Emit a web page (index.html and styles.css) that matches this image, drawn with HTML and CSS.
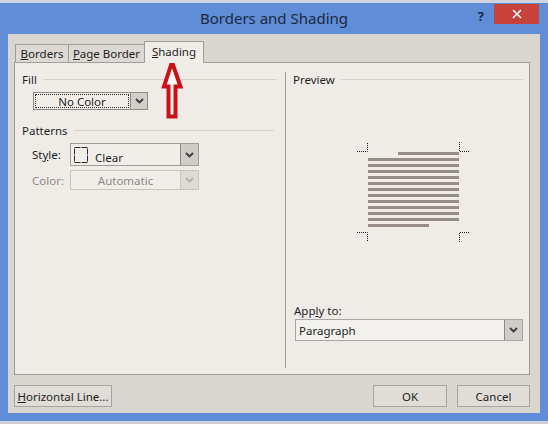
FILE: index.html
```html
<!DOCTYPE html>
<html>
<head>
<meta charset="utf-8">
<link rel="stylesheet" href="styles.css">
</head>
<body>
<div class="frame">
  <div class="titlebar">
    <div class="tb-spacer"></div>
    <div class="title">Borders and Shading</div>
    <div class="tb-controls">
      <span class="help">?</span>
      <span class="close"><svg width="10" height="10" viewBox="0 0 10 10"><path d="M1 1 L9 9 M9 1 L1 9" stroke="#fff" stroke-width="1.6" fill="none"/></svg></span>
    </div>
  </div>
  <div class="dialog">
    <div class="tabs">
      <div class="tab tab-first"><u>B</u>orders</div>
      <div class="tab tab-second"><u>P</u>age Border</div>
      <div class="tab active"><u>S</u>hading</div>
    </div>
    <div class="panel">
      <div class="col-left">
        <div class="group-title"><span>Fill</span><i class="rule"></i></div>
        <div class="combo nocolor">
          <div class="combo-text"><span class="focus">No Color</span></div>
          <div class="drop"><svg width="9" height="6" viewBox="0 0 9 6"><path d="M1 1 L4.5 4.5 L8 1" stroke="#3a3a3a" stroke-width="1.8" fill="none"/></svg></div>
        </div>
        <div class="group-title patterns"><span>Patterns</span><i class="rule"></i></div>
        <div class="field-row style-row">
          <span class="field-label">St<u>y</u>le:</span>
          <div class="combo style-combo">
            <div class="combo-text">
              <svg class="swatch" width="16" height="18" viewBox="0 0 16 18"><rect x="1.5" y="1.5" width="13" height="15" fill="none" stroke="#2a2a2a" stroke-width="1" stroke-dasharray="6 1"/></svg>
              <span class="clear-text">Clear</span>
            </div>
            <div class="drop"><svg width="9" height="6" viewBox="0 0 9 6"><path d="M1 1 L4.5 4.5 L8 1" stroke="#3a3a3a" stroke-width="1.8" fill="none"/></svg></div>
          </div>
        </div>
        <div class="field-row color-row disabled">
          <span class="field-label">Color:</span>
          <div class="combo color-combo">
            <div class="combo-text centered">Automatic</div>
            <div class="drop"><svg width="9" height="6" viewBox="0 0 9 6"><path d="M1 1 L4.5 4.5 L8 1" stroke="#b3b0ac" stroke-width="1.8" fill="none"/></svg></div>
          </div>
        </div>
      </div>
      <div class="col-right">
        <div class="group-title preview-title"><span>Preview</span><i class="rule"></i></div>
        <svg class="preview" width="113" height="100" viewBox="0 0 113 100">
          <g stroke="#1a1a1a" stroke-width="1" stroke-dasharray="1 1" fill="none">
            <path d="M0 9.5 H10.5 V0"/>
            <path d="M112 9.5 H102.5 V0"/>
            <path d="M0 90.5 H10.5 V100"/>
            <path d="M112 90.5 H102.5 V100"/>
          </g>
          <g fill="#958d86">
            <rect x="41" y="10" width="61" height="3"/>
            <rect x="11" y="16" width="91" height="3"/>
            <rect x="11" y="22" width="91" height="3"/>
            <rect x="11" y="28" width="91" height="3"/>
            <rect x="11" y="34" width="91" height="3"/>
            <rect x="11" y="40" width="91" height="3"/>
            <rect x="11" y="46" width="91" height="3"/>
            <rect x="11" y="52" width="91" height="3"/>
            <rect x="11" y="58" width="91" height="3"/>
            <rect x="11" y="64" width="91" height="3"/>
            <rect x="11" y="70" width="91" height="3"/>
            <rect x="11" y="76" width="91" height="3"/>
            <rect x="11" y="82" width="61" height="3"/>
          </g>
        </svg>
        <div class="apply-label">App<u>l</u>y to:</div>
        <div class="combo apply-combo">
          <div class="combo-text">Paragraph</div>
          <div class="drop"><svg width="9" height="6" viewBox="0 0 9 6"><path d="M1 1 L4.5 4.5 L8 1" stroke="#3a3a3a" stroke-width="1.8" fill="none"/></svg></div>
        </div>
      </div>
    </div>
    <div class="buttons">
      <div class="btn hline"><u>H</u>orizontal Line...</div>
      <div class="btn-group">
        <div class="btn ok">OK</div>
        <div class="btn cancel">Cancel</div>
      </div>
    </div>
  </div>
  <svg class="annot-arrow" width="30" height="68" viewBox="155 55 30 68">
    <polygon points="172,62 164,86.5 168.5,86.5 168.5,116.5 175.5,116.5 175.5,86.5 180.5,86.5" fill="#fbf7f5" stroke="#cc1018" stroke-width="4" stroke-linejoin="miter"/>
  </svg>
</div>
</body>
</html>
```

FILE: styles.css
```css
* { box-sizing: border-box; }
html, body { margin: 0; padding: 0; }
body {
  width: 548px;
  height: 424px;
  overflow: hidden;
  font-family: "Noto Sans", "DejaVu Sans", sans-serif;
  font-size: 11.5px;
  color: #1e1e1e;
}
u { text-decoration: underline; text-underline-offset: 1px; }

.frame {
  position: relative;
  width: 548px;
  height: 424px;
  background: #5f8dd7;
  border-top: 3px solid #cfd4dc;
  border-bottom: 3px solid #cdd1d6;
  padding: 0 8px 8px 8px;
  display: flex;
  flex-direction: column;
}

.titlebar {
  height: 31px;
  display: grid;
  grid-template-columns: 1fr auto 1fr;
  align-items: start;
}
.title {
  font-size: 15px;
  color: #1c2940;
  line-height: 20px;
  margin-top: 5px;
  white-space: nowrap;
}
.tb-controls {
  justify-self: end;
  display: flex;
  align-items: flex-start;
  margin-right: 1px;
}
.help {
  font-weight: bold;
  font-size: 13px;
  color: #1b2a45;
  line-height: 16px;
  margin-top: 5px;
  margin-right: 10px;
}
.close {
  width: 45px;
  height: 20px;
  margin-top: 1px;
  background: #c7423a;
  display: flex;
  align-items: center;
  justify-content: center;
}

.dialog {
  flex: 1;
  background: #d9d5cf;
  padding: 7px 2px 6px 6px;
  display: flex;
  flex-direction: column;
}

.tabs {
  height: 21px;
  display: flex;
  align-items: flex-end;
  padding-left: 1px;
  position: relative;
  z-index: 1;
}
.tab {
  height: 18px;
  line-height: 17px;
  padding: 0;
  text-align: center;
  border: 1px solid #a09d98;
  border-bottom: none;
  background: #dcd8d3;
  margin-left: -1px;
  white-space: nowrap;
}
.tab-first { margin-left: 0; width: 54px; }
.tab-second { width: 77px; }
.tab.active {
  height: 22px;
  margin-bottom: -1px;
  background: #f0ede9;
  width: 60px;
  line-height: 20px;
}

.panel {
  height: 313px;
  border: 1px solid #a09d98;
  background: #efece8;
  display: flex;
  width: 516px;
}
.col-left {
  width: 270px;
  padding-top: 9px;
}
.col-right {
  flex: 1;
  margin: 9px 0 6px 0;
  border-left: 1px solid #a29f9a;
  display: flex;
  flex-direction: column;
}

.group-title {
  height: 15px;
  line-height: 15px;
  display: flex;
  align-items: center;
  padding-left: 7px;
  margin-right: 8px;
}
.group-title .rule {
  flex: 1;
  height: 1px;
  background: #d6d2cd;
  margin-left: 6px;
}
.patterns { margin-top: 13px; margin-right: 11px; }
.preview-title { padding-left: 7px; margin-right: 6px; }

.combo {
  display: flex;
  border: 1px solid #a8a5a0;
  background: #f1eeea;
}
.combo-text {
  flex: 1;
  display: flex;
  align-items: center;
  white-space: nowrap;
}
.combo-text.centered { justify-content: center; }
.drop {
  width: 17px;
  border-left: 1px solid #8d8a86;
  background: #d2cec9;
  display: flex;
  align-items: center;
  justify-content: center;
}

.nocolor {
  margin: 5px 0 0 18px;
  width: 115px;
  height: 18px;
  border-color: #8e8b87;
}
.nocolor .combo-text { padding: 1px; }
.focus {
  flex: 1;
  height: 100%;
  border: 1px dotted #2a2a2a;
  text-align: center;
  line-height: 13px;
}

.field-row {
  display: flex;
  align-items: center;
  margin-left: 17px;
}
.field-label { width: 38px; }
.style-row { margin-top: 5px; }
.style-combo { width: 129px; height: 23px; border-color: #a09d98; }
.style-combo .combo-text { padding-left: 2px; }
.clear-text { margin-left: 6px; margin-top: 6px; }
.style-combo .drop { width: 18px; background: #cfcbc6; }

.color-row { margin-top: 4px; }
.disabled .field-label { color: #8c8985; }
.color-combo {
  width: 129px;
  height: 20px;
  border: 1px solid #c9c5c0;
  color: #8c8985;
}
.color-combo .drop { width: 18px; background: #dedad6; border-left-color: #c9c5c0; }

.preview { margin: 55px 0 0 71px; display: block; }
.apply-label { margin: 61px 0 0 8px; line-height: 15px; }
.apply-combo {
  margin: 1px 0 0 9px;
  width: 228px;
  height: 22px;
  background: #f3f1ed;
}
.apply-combo .combo-text { padding-left: 3px; }
.apply-combo .drop { width: 18px; background: #d0ccc7; }

.buttons {
  margin-top: 10px;
  height: 22px;
  display: flex;
  justify-content: space-between;
  width: 516px;
}
.btn-group { display: flex; gap: 10px; }
.btn {
  height: 22px;
  border: 1px solid #a8a5a0;
  background: #e0dcd7;
  display: flex;
  align-items: center;
  justify-content: center;
  white-space: nowrap;
}
.hline { width: 98px; }
.ok { width: 74px; }
.cancel { width: 73px; }

.annot-arrow {
  position: absolute;
  left: 155px;
  top: 52px;
}
```
